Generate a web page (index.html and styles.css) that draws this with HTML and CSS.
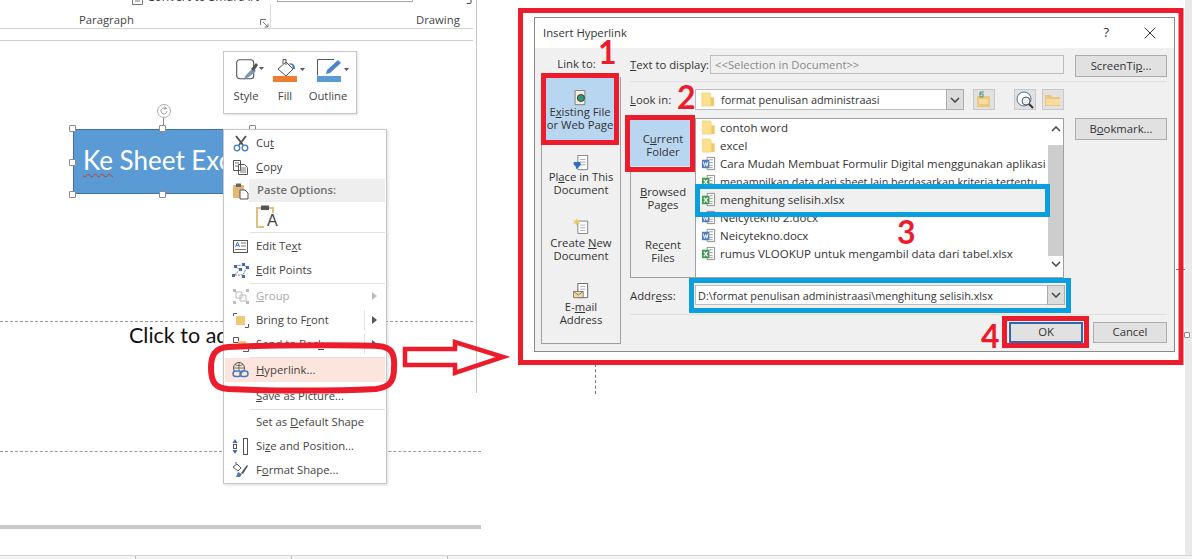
FILE: index.html
```html
<!DOCTYPE html>
<html lang="en">
<head>
<meta charset="utf-8">
<title>Insert Hyperlink</title>
<link rel="stylesheet" href="styles.css">
</head>
<body>
<svg class="defs" width="0" height="0" aria-hidden="true">
  <defs>
    <symbol id="folder" viewBox="0 0 16 17"><path d="M1 1h9l1 1v14H1z" fill="#fbe08e"/><path d="M11 6h4v10h-4z" fill="#f2c767"/><path d="M1 1h9l1 1v14H1z" fill="none" stroke="#efcf7c" stroke-width=".8"/></symbol>
    <symbol id="xls" viewBox="0 0 16 16"><path d="M6.500 1.500h8v13h-8z" fill="#fff" stroke="#8b8b8b"/><path d="M9 4h3.500M9 7h3.500M9 10h3.500M9 12.500h3.500" stroke="#9a9a9a"/><path d="M1 4h8v9H1z" fill="#3f9a4d"/><path d="M3 6l4 5M7 6l-4 5" stroke="#fff" stroke-width="1.300"/></symbol>
    <symbol id="doc" viewBox="0 0 16 16"><path d="M6.500 1.500h8v13h-8z" fill="#fff" stroke="#8b8b8b"/><path d="M9 4h3.500M9 7h3.500M9 10h3.500M9 12.500h3.500" stroke="#9a9a9a"/><path d="M1 4h8v9H1z" fill="#4f78c0"/><path d="M2.500 6l1.200 5 1.300-4 1.300 4 1.200-5" stroke="#fff" fill="none"/></symbol>
    <symbol id="chev" viewBox="0 0 10 6"><path d="M1 1l4 4 4-4" fill="none" stroke="#444" stroke-width="1.500"/></symbol>
    <symbol id="caret" viewBox="0 0 5 8"><path d="M0 0l5 4-5 4z"/></symbol>
  </defs>
</svg>

<div class="workspace">
  <div class="ribbon">
    <div class="ribbon-clip">
      <svg class="convert-ic" width="11" height="5" viewBox="0 0 11 5"><path d="M.5 0v4.500h10V0M3 1h5" fill="none" stroke="#777"/></svg>
      <span class="convert">Convert to SmartArt</span>
      <span class="fontbox"></span>
      <span class="three">3</span>
    </div>
    <div class="ribbon-groups">
      <div class="group group-para">
        <span>Paragraph</span>
        <svg class="launcher" width="9" height="9" viewBox="0 0 9 9"><path d="M.5 6V.5H6M3 3l5 5M8 4.500V8H4.500" fill="none" stroke="#777"/></svg>
      </div>
      <div class="group group-draw"><span>Drawing</span></div>
    </div>
  </div>
  <div class="ruler"></div>
  <div class="canvas">
    <div class="dash dash-a"></div>
    <div class="dash dash-b"></div>
    <div class="placeholder">Click to add</div>
    <div class="shape">
      <span class="shape-text"><span class="squiggle">Ke</span> Sheet Excel</span>
      <i class="handle h-tl"></i><i class="handle h-tc"></i><i class="handle h-tr"></i>
      <i class="handle h-ml"></i><i class="handle h-bl"></i><i class="handle h-bc"></i>
      <i class="stem"></i>
      <svg class="rotate" width="16" height="16" viewBox="0 0 16 16"><circle cx="8" cy="8" r="6.500" fill="#fff" stroke="#aaa"/><path d="M11 8a3 3 0 1 1-1-2.300M8.500 3.500l2 2-2.500.8" fill="none" stroke="#999"/></svg>
    </div>
  </div>
</div>
<div class="hscroll"></div>
<div class="statusbar"><i></i><i></i><i></i></div>
<div class="rightstrip"></div>
<i class="vdash"></i>
<i class="hdash-right"></i>
<i class="handle far-handle"></i>

<div class="minibar">
  <div class="mini mini-style">
    <svg width="30" height="25" viewBox="0 0 30 25"><rect x=".7" y=".7" width="17" height="19" rx="3" fill="#fff" stroke="#555" stroke-width="1.100"/><path d="M7 21l3-5 7-7 3 3-7 6z" fill="#7b97b8"/><path d="M15 10l5-6 2 2-4 6z" fill="#555"/><path d="M23 8h5l-2.500 3z" fill="#555"/></svg>
    <span>Style</span>
  </div>
  <div class="mini mini-fill">
    <svg width="32" height="25" viewBox="0 0 32 25"><path d="M5 10l8-7 7 7-7 7z" fill="#fff" stroke="#555"/><path d="M10 5V.5h3V6" fill="none" stroke="#555"/><path d="M15 5c4-2 7 0 7 5h-2l-1-4z" fill="#3f7cc0"/><path d="M0 17h24v6H0z" fill="#ed7d31"/><path d="M27 9h5l-2.500 3z" fill="#555"/></svg>
    <span>Fill</span>
  </div>
  <div class="mini mini-outline">
    <svg width="32" height="25" viewBox="0 0 32 25"><path d="M17 .5H.5v16" fill="none" stroke="#555"/><path d="M9 15l1-4L21 1l3 3-11 10z" fill="#4a86c8"/><path d="M0 17h24v6H0z" fill="#5b9bd5"/><path d="M27 9h5l-2.500 3z" fill="#555"/></svg>
    <span>Outline</span>
  </div>
</div>

<div class="menu">
  <div class="item"><span class="ic"><svg width="16" height="17" viewBox="0 0 16 17"><path d="M3 1l7 9M13 1L6 10" stroke="#555" stroke-width="2"/><circle cx="4" cy="13" r="2.800" fill="none" stroke="#3f7cc0" stroke-width="1.300"/><circle cx="12" cy="13" r="2.800" fill="none" stroke="#3f7cc0" stroke-width="1.300"/></svg></span><span>Cu<u>t</u></span></div>
  <div class="item"><span class="ic"><svg width="16" height="15" viewBox="0 0 16 15"><path d="M.5.500h7v10h-7zM5.500 4.500h6l3 3v7h-9z" fill="#fff" stroke="#555"/><path d="M2 3h4M2 6h3M7 8h6M7 10h6M7 12h6" stroke="#777"/></svg></span><span><u>C</u>opy</span></div>
  <div class="item item-head"><span class="ic"><svg width="17" height="18" viewBox="0 0 17 18"><path d="M1 3h11v13H1z" fill="#e4b874"/><path d="M4 1.500h5V5H4z" fill="#666"/><path d="M8 8h5l3 3v6H8z" fill="#fff" stroke="#555"/></svg></span><span class="head-label">Paste Options:</span></div>
  <div class="paste-row"><svg width="22" height="25" viewBox="0 0 22 25"><path d="M1 4h16v19H1z" fill="#fff" stroke="#e4bd80" stroke-width="2"/><path d="M5 1.500h8V6H5z" fill="#555"/><rect x="8" y="9" width="14" height="16" fill="#fff"/></svg><b>A</b></div>
  <div class="sep"></div>
  <div class="item"><span class="ic"><svg width="15" height="13" viewBox="0 0 15 13"><rect x=".5" y=".5" width="14" height="12" fill="#fff" stroke="#555"/><path d="M2.500 7l2-5 2 5M3.300 5.500h2.500" fill="none" stroke="#3f7cc0"/><path d="M8 3h5M8 6h5M2 9.500h11" stroke="#777"/></svg></span><span>Edit Te<u>x</u>t</span></div>
  <div class="item"><span class="ic"><svg width="17" height="15" viewBox="0 0 17 15"><path d="M3 3l5 4-6 5h9l4-8-4-2z" fill="none" stroke="#777" stroke-dasharray="2 1"/><path d="M0 11h3v3H0zM10 0h3v3h-3zM7 5h3v3H7zM14 3h3v3h-3zM10 12h3v3h-3zM2 2h3v3H2z" fill="#3f6fa8"/></svg></span><span><u>E</u>dit Points</span></div>
  <div class="sep sep-top"></div>
  <div class="item item-off"><span class="ic"><svg width="16" height="15" viewBox="0 0 16 15"><path d="M3 3h6v6H3zM7 6h6v6H7z" fill="none" stroke="#bbb"/><path d="M0 0h3v3H0zM13 0h3v3h-3zM0 12h3v3H0zM13 12h3v3h-3z" fill="#bbb"/></svg></span><span><u>G</u>roup</span><svg class="caret" width="5" height="8"><use href="#caret"/></svg></div>
  <div class="item"><span class="ic"><svg width="16" height="15" viewBox="0 0 16 15"><path d="M.5 3V.5H4M15.500 11v3.500H12" fill="none" stroke="#555"/><rect x="3" y="3" width="9" height="9" fill="#f0c878"/></svg></span><span>Bring to F<u>r</u>ont</span><i class="vbar"></i><svg class="caret" width="5" height="8"><use href="#caret"/></svg></div>
  <div class="item"><span class="ic"><svg width="16" height="15" viewBox="0 0 16 15"><path d="M.5.500h5v5h-5zM10 14.500h5.500v-5" fill="none" stroke="#555"/><rect x="5" y="4" width="8" height="8" fill="#f0c878"/></svg></span><span>Send to Bac<u>k</u></span><i class="vbar"></i><svg class="caret" width="5" height="8"><use href="#caret"/></svg></div>
  <div class="sep sep-top"></div>
  <div class="item item-hot"><span class="ic"><svg width="17" height="16" viewBox="0 0 17 16"><circle cx="7" cy="6" r="5.500" fill="none" stroke="#555"/><path d="M1.500 6h11M7 .5v11M3 2.500c2 1.500 6 1.500 8 0" fill="none" stroke="#555" stroke-width=".8"/><rect x="1" y="9" width="8" height="5.500" rx="2.700" fill="#fde4dc" stroke="#3f7cc0" stroke-width="1.500"/><rect x="8" y="9" width="8" height="5.500" rx="2.700" fill="none" stroke="#3f7cc0" stroke-width="1.500"/></svg></span><span><u>H</u>yperlink...</span></div>
  <div class="item item-gap"><span class="ic"></span><span><u>S</u>ave as Picture...</span></div>
  <div class="sep sep-top"></div>
  <div class="item"><span class="ic"></span><span>Set as <u>D</u>efault Shape</span></div>
  <div class="item"><span class="ic"><svg width="17" height="17" viewBox="0 0 17 17"><path d="M.5 5h5l-2.500-4zM.5 12h5l-2.500 4z" fill="#3f6fa8"/><rect x="1.500" y="6.500" width="3" height="4" fill="none" stroke="#555"/><rect x="11.500" y=".5" width="4" height="16" fill="none" stroke="#555"/></svg></span><span>Si<u>z</u>e and Position...</span></div>
  <div class="item"><span class="ic"><svg width="17" height="16" viewBox="0 0 17 16"><path d="M1 5l4-3 4 4-3 3z" fill="#fff" stroke="#555"/><path d="M4 2V0" stroke="#555"/><path d="M4 15l2-5 4 2-2 3z" fill="#4f7ca8"/><path d="M9 11l6-8 1 1-5 8z" fill="#555"/></svg></span><span>F<u>o</u>rmat Shape...</span></div>
</div>

<section class="dialog">
  <header class="titlebar">
    <span class="title">Insert Hyperlink</span>
    <span class="help">?</span>
    <svg class="close" width="12" height="12" viewBox="0 0 12 12"><path d="M.7.700l10.600 10.600M11.300.700L.7 11.300" stroke="#333" stroke-width="1"/></svg>
  </header>
  <div class="dialog-body">
    <aside class="linkto">
      <div class="linkto-label">Link to:</div>
      <nav class="linkpanel">
        <div class="linktab linktab-on">
          <svg viewBox="0 0 18 18"><path d="M3.500.5h11v16h-11z" fill="#f6efd8" stroke="#777"/><circle cx="10" cy="9" r="4" fill="#2f9a78" stroke="#333"/></svg>
          <span>E<u>x</u>isting File<br>or Web Page</span>
        </div>
        <div class="linktab linktab-place">
          <svg viewBox="0 0 18 18"><path d="M5.500.5h11v16h-11z" fill="#fff" stroke="#777"/><path d="M8 5h6M8 8h6M8 11h6" stroke="#8aa"/><path d="M8 8L1 8c-1 2 0 4 2 5l1 3 5-5z" fill="#2f6fc0"/></svg>
          <span>Pl<u>a</u>ce in This<br>Document</span>
        </div>
        <div class="linktab linktab-new">
          <svg viewBox="0 0 18 18"><path d="M5.500 3.500h11v14h-11z" fill="#fff" stroke="#777"/><path d="M8 8h6M8 11h6M8 14h6" stroke="#aaa"/><path d="M4 0l1 3 3-1-2 3 3 2-4-1-1 3-1-3-3 1 2-3-2-2 3 1z" fill="#e8c860"/></svg>
          <span>Create <u>N</u>ew<br>Document</span>
        </div>
        <div class="linktab linktab-mail">
          <svg viewBox="0 0 18 18"><path d="M5.500.5h11v16h-11z" fill="#fff" stroke="#555"/><path d="M8 4h6M8 7h6" stroke="#aaa"/><path d="M.5 9.500h11v7H.5z" fill="#f2d9a0" stroke="#777"/><path d="M.5 9.500l5.500 4 5.500-4" fill="none" stroke="#777"/></svg>
          <span>E-<u>m</u>ail<br>Address</span>
        </div>
      </nav>
    </aside>
    <div class="main">
      <div class="row row-display">
        <label class="label-display"><u>T</u>ext to display:</label>
        <div class="field field-display">&lt;&lt;Selection in Document&gt;&gt;</div>
        <button class="btn btn-side">ScreenTi<u>p</u>...</button>
      </div>
      <div class="hr"></div>
      <div class="row row-look">
        <label class="label-look"><u>L</u>ook in:</label>
        <div class="combo">
          <svg class="combo-folder" width="14" height="15"><use href="#folder"/></svg>
          <span class="combo-text">format penulisan administraasi</span>
          <span class="combo-btn"><svg width="10" height="6"><use href="#chev"/></svg></span>
        </div>
        <span class="tool tool-a"><svg width="18" height="17" viewBox="0 0 18 17"><path d="M2 5h13v11H2z" fill="#eec77e"/><path d="M4 8h9v5H4z" fill="#f7dca0"/><path d="M5 6V1h4M5 3h3v3H5" fill="none" stroke="#3f9a78"/></svg></span>
        <span class="tool tool-b"><svg width="18" height="18" viewBox="0 0 18 18"><circle cx="8" cy="8" r="7" fill="#fff" stroke="#4a6f98"/><circle cx="10" cy="10" r="4" fill="#e8f0f6" stroke="#555"/><path d="M13 13l4 4" stroke="#333" stroke-width="2"/></svg></span>
        <span class="tool tool-c"><svg width="18" height="14" viewBox="0 0 18 14"><path d="M1 2h6l1 2h8v9H1z" fill="#eec77e"/><path d="M2 6h14v6H2z" fill="#f7dca0"/></svg></span>
      </div>
      <div class="row row-browse">
        <div class="subtabs">
          <div class="subtab subtab-on">C<u>u</u>rrent<br>Folder</div>
          <div class="subtab subtab-browsed"><u>B</u>rowsed<br>Pages</div>
          <div class="subtab subtab-recent">Re<u>c</u>ent<br>Files</div>
        </div>
        <div class="list">
          <div class="files">
            <div class="file"><svg width="15" height="15"><use href="#folder"/></svg>contoh word</div>
            <div class="file"><svg width="15" height="15"><use href="#folder"/></svg>excel</div>
            <div class="file file-snug"><svg width="15" height="15"><use href="#doc"/></svg>Cara Mudah Membuat Formulir Digital menggunakan aplikasi</div>
            <div class="file file-tight"><svg width="15" height="15"><use href="#xls"/></svg>menampilkan data dari sheet lain berdasarkan kriteria tertentu</div>
            <div class="file file-on"><svg width="15" height="15"><use href="#xls"/></svg>menghitung selisih.xlsx</div>
            <div class="file"><svg width="15" height="15"><use href="#doc"/></svg>Neicytekno 2.docx</div>
            <div class="file"><svg width="15" height="15"><use href="#doc"/></svg>Neicytekno.docx</div>
            <div class="file"><svg width="15" height="15"><use href="#xls"/></svg>rumus VLOOKUP untuk mengambil data dari tabel.xlsx</div>
          </div>
          <div class="scrollbar">
            <svg width="10" height="6" class="flip"><use href="#chev"/></svg>
            <div class="thumb"></div>
            <svg width="10" height="6"><use href="#chev"/></svg>
          </div>
        </div>
        <button class="btn btn-side">B<u>o</u>okmark...</button>
      </div>
      <div class="row row-address">
        <label class="label-look">Addr<u>e</u>ss:</label>
        <div class="combo combo-address">
          <span class="combo-text">D:\format penulisan administraasi\menghitung selisih.xlsx</span>
          <span class="combo-btn"><svg width="10" height="6"><use href="#chev"/></svg></span>
        </div>
      </div>
      <div class="hr hr-foot"></div>
      <div class="row row-foot">
        <button class="btn btn-foot btn-ok">OK</button>
        <button class="btn btn-foot">Cancel</button>
      </div>
    </div>
  </div>
</section>

<svg class="marks" width="1192" height="559" viewBox="0 0 1192 559" aria-hidden="true">
  <g fill="none" stroke="#ec1c2c" stroke-width="5">
    <rect x="520.500" y="10.500" width="660.500" height="352"/>
    <rect x="543.500" y="75.500" width="73" height="67"/>
    <rect x="627.500" y="117.500" width="65" height="52"/>
    <rect x="1004.500" y="318.500" width="82" height="27"/>
    <path d="M228 347c40-2 130-2 150-1 14 1 17 8 16 22 0 12-3 19-18 21-40 2-110 2-148 0-13-1-17-7-17-21 0-13 4-20 17-21z" stroke-width="6"/>
    <path d="M405 349h50v-7l48 15-48 16v-8h-50z" stroke-width="4.500"/>
  </g>
  <g fill="none" stroke="#0c9fe0" stroke-width="5">
    <rect x="697.500" y="186.500" width="350" height="28"/>
    <rect x="691.500" y="280.500" width="377" height="30"/>
  </g>
</svg>
<span class="num num-1">1</span>
<span class="num num-2">2</span>
<span class="num num-3">3</span>
<span class="num num-4">4</span>
</body>
</html>
```
FILE: styles.css
```css
* { box-sizing: border-box; }
html, body { margin: 0; padding: 0; }
body {
  position: relative;
  width: 1192px;
  height: 559px;
  overflow: hidden;
  background: #fff;
  font-family: "Open Sans", "Noto Sans", sans-serif;
  font-size: 11.3px;
  color: #444;
}
.defs { position: absolute; }
u { text-underline-offset: 1px; }
svg { display: block; flex: none; }

.workspace { position: relative; width: 481px; height: 525px; }
.workspace::after { content: ""; position: absolute; left: 476px; top: 0; width: 1px; height: 393px; background: #c6c6c6; }
.ribbon { position: relative; width: 473px; height: 29px; border-bottom: 1px solid #d4d4d4; }
.ribbon-clip { height: 12px; position: relative; overflow: hidden; }
.convert-ic { position: absolute; left: 132px; top: 0; }
.convert { position: absolute; left: 147px; top: -12px; font-size: 12px; color: #444; }
.fontbox { position: absolute; left: 277px; top: -10px; width: 136px; height: 12px; border: 1px solid #aaa; }
.three { position: absolute; left: 466px; top: -7px; font-size: 11px; line-height: 14px; }
.ribbon-groups { display: flex; height: 16px; align-items: center; }
.group { display: flex; align-items: center; position: relative; }
.group-para { width: 271px; height: 24px; margin-top: -8px; padding: 6px 0 0 79px; border-right: 1px solid #ddd; }
.group-draw { margin-left: 145px; margin-top: -2px; }
.launcher { position: absolute; left: 260px; top: 15px; }
.ruler { width: 473px; height: 12px; border-bottom: 1px solid #ccc; }
.canvas { position: relative; height: 484px; }
.dash { position: absolute; left: 0; border-top: 1px dashed #9a9a9a; }
.dash-a { top: 280px; width: 473px; }
.dash-b { top: 410px; width: 481px; }
.placeholder { position: absolute; left: 129px; top: 281px; font-family: "Lato", sans-serif; font-size: 21.500px; color: #111; white-space: nowrap; }

.shape {
  position: absolute; left: 73px; top: 88px; width: 180px; height: 65px;
  background: #5b9bd5; border: 1px solid #41719c;
}
.shape-text { position: absolute; left: 9px; top: 15px; font-family: "Lato", sans-serif; font-size: 26px; color: #fff; white-space: nowrap; line-height: 30px; }
.squiggle { text-decoration: underline wavy #c0392b 1px; text-underline-offset: 3px; }
.handle { position: absolute; width: 7px; height: 7px; background: #fff; border: 1px solid #8a8a8a; border-radius: 1px; }
.h-tl { left: -5px; top: -5px; } .h-tc { left: 85px; top: -5px; } .h-tr { left: 175px; top: -5px; }
.h-ml { left: -5px; top: 29px; } .h-bl { left: -5px; top: 61px; } .h-bc { left: 85px; top: 61px; }
.stem { position: absolute; left: 89px; top: -12px; width: 1px; height: 8px; background: #8a8a8a; }
.rotate { position: absolute; left: 82px; top: -27px; }

.hscroll { position: absolute; left: 0; top: 525px; width: 481px; height: 4px; background: #c8c8c8; }
.statusbar { position: absolute; left: 0; top: 555px; width: 1192px; height: 4px; border-top: 1px solid #d6d6d6; background: #f4f4f4; display: flex; padding-left: 135px; gap: 155px; }
.statusbar i { width: 1px; height: 3px; background: #bbb; }
.rightstrip { position: absolute; right: 0; top: 0; width: 7px; height: 555px; background: #e9e9e9; }
.vdash { position: absolute; left: 595px; top: 364px; height: 30px; border-left: 1px dashed #777; }
.hdash-right { position: absolute; left: 1176px; top: 269px; width: 9px; border-top: 1px dashed #777; }
.far-handle { left: 1184px; top: 332px; width: 6px; height: 6px; }

.minibar {
  position: absolute; left: 223px; top: 51px; width: 134px; height: 63px;
  background: #fff; border: 1px solid #c6c6c6; box-shadow: 1px 1px 2px rgba(0,0,0,.12);
  display: flex; padding: 7px 0 0 7px;
}
.mini { display: flex; flex-direction: column; align-items: center; gap: 4px; width: 30px; }
.mini svg { align-self: flex-start; }
.mini span { line-height: 16px; }
.mini-style svg { margin-left: 5px; }
.mini-fill { margin-left: 9px; }
.mini-fill svg { margin-left: 3px; }
.mini-outline { margin-left: 13px; }
.mini-outline svg { margin-left: 4px; }

.menu {
  position: absolute; left: 223px; top: 129px; width: 164px; height: 355px;
  background: #fff; border: 1px solid #c6c6c6; box-shadow: 1px 1px 3px rgba(0,0,0,.15);
  padding: 1px;
}
.item { display: flex; align-items: center; height: 24px; position: relative; white-space: nowrap; }
.item > span:not(.ic):not(.head-label) { margin-top: -2px; }
.ic { width: 31px; display: flex; justify-content: center; align-items: center; flex: none; }
.item-head { height: 23px; }
.head-label { flex: 1; align-self: stretch; background: #eee; margin-left: -7px; padding-left: 8px; line-height: 22px; font-weight: 600; color: #707070; }
.paste-row { position: relative; height: 30px; padding: 2px 0 0 31px; }
.paste-row b { position: absolute; left: 42px; top: 10px; font-size: 16px; line-height: 18px; color: #444; font-family: "Liberation Sans", sans-serif; font-weight: 400; }
.sep { height: 1px; background: #e2e2e2; margin: 0 0 1px 25px; }
.sep-top { margin-top: 1px; margin-bottom: 0; }
.item-off { color: #aaa; }
.item-hot { background: #fde4dc; }
.item-gap { margin-top: 2px; }
.caret { position: absolute; left: 147px; top: 8px; fill: #555; }
.item-off .caret { fill: #bbb; }
.vbar { position: absolute; left: 139px; top: 2px; width: 1px; height: 20px; background: #e2e2e2; }

.dialog {
  position: absolute; left: 534px; top: 17px; width: 641px; height: 335px;
  background: #f0f0f0; border: 1px solid #8a8a8a; color: #333;
  display: flex; flex-direction: column;
}
.titlebar { height: 30px; background: #fff; display: flex; align-items: center; padding: 0 18px 2px 8px; flex: none; }
.title { flex: 1; }
.help { font-size: 13px; margin-right: 35px; color: #333; }
.close { margin-top: 2px; }
.dialog-body { flex: 1; display: flex; padding: 0 7px 0 6px; }
.linkto { width: 89px; flex: none; }
.linkto-label { height: 29px; padding-top: 8px; line-height: 16px; text-align: center; width: 71px; }
.linkpanel { width: 80px; height: 267px; border: solid #a0a0a0; border-width: 0 1px 1px; }
.linktab { display: flex; flex-direction: column; align-items: center; text-align: center; line-height: 13px; }
.linktab svg { width: 16px; height: 16px; }
.linktab span { display: block; }
.linktab-on { height: 64px; background: #b9d6f0; margin: 0 5px 0 3px; padding-top: 13px; }
.linktab-on span { margin-top: -1px; }
.linktab-place { margin-top: 14px; }
.linktab-place span { margin-top: -1px; }
.linktab-new { margin-top: 22px; }
.linktab-new span { margin-top: 2px; }
.linktab-mail { margin-top: 21px; }
.linktab-mail span { margin-top: 1px; }
.main { width: 537px; flex: none; padding-top: 7px; }
.row { display: flex; }
.row-display { height: 22px; align-items: flex-start; }
.label-display { width: 80px; line-height: 19px; white-space: nowrap; }
.field-display { width: 354px; height: 19px; border: 1px solid #bdbdbd; background: #f0f0f0; color: #8a8a8a; padding-left: 4px; line-height: 17px; margin-right: 11px; }
.btn { font: inherit; color: #333; background: #e1e1e1; border: 1px solid #adadad; padding: 0 0 2px; margin: 0; border-radius: 0; }
.btn-side { width: 92px; height: 22px; flex: none; }
.hr { height: 1px; background: #e0e0e0; margin-top: 4px; }
.row-look { margin-top: 7px; height: 21px; align-items: center; }
.label-look { width: 65px; flex: none; white-space: nowrap; line-height: 21px; }
.combo { width: 269px; height: 21px; background: #fff; border: 1px solid #bdbdbd; display: flex; align-items: center; padding-left: 5px; position: relative; }
.combo-folder { margin-right: 6px; }
.combo-text { flex: 1; white-space: nowrap; color: #333; font-size: 10.900px; }
.combo-btn { width: 18px; align-self: stretch; background: #dcdcdc; border: 1px solid #adadad; display: flex; align-items: center; justify-content: center; margin: -1px -1px -1px 0; }
.tool { height: 21px; width: 22px; background: #e1e1e1; border: 1px solid #c8c8c8; display: flex; align-items: center; justify-content: center; }
.tool-a { margin-left: 9px; }
.tool-b { margin-left: 19px; }
.tool-c { margin-left: 6px; }
.row-browse { margin-top: 8px; height: 160px; align-items: flex-start; }
.subtabs { width: 65px; height: 160px; flex: none; border: solid #a0a0a0; border-width: 0 0 1px 1px; text-align: center; line-height: 13px; }
.subtab-on { height: 48px; background: #b9d6f0; padding-top: 14px; margin: 0 -1px; }
.subtab-browsed { margin-top: 19px; }
.subtab-recent { margin-top: 27px; }
.list { width: 369px; height: 160px; background: #fff; border: 1px solid #a0a0a0; display: flex; margin-right: 11px; flex: none; overflow: hidden; }
.files { width: 352px; flex: none; margin-top: -1px; overflow: hidden; }
.file { height: 18px; display: flex; align-items: center; gap: 4px; padding-left: 5px; white-space: nowrap; font-size: 11.500px; }
.file-snug { font-size: 11.400px; }
.file-tight { font-size: 10.800px; }
.file-on { background: #f0f0f0; box-shadow: 0 0 0 4px #f0f0f0; }
.scrollbar { flex: 1; display: flex; flex-direction: column; align-items: center; padding-top: 7px; }
.flip { transform: rotate(180deg); }
.thumb { width: 100%; height: 111px; background: #cdcdcd; margin: 13px 0 5px; }
.row-address { margin-top: 7px; height: 20px; align-items: center; }
.combo-address { width: 370px; height: 20px; padding-left: 2px; }
.hr-foot { margin-top: 9px; }
.row-foot { margin-top: 7px; justify-content: flex-end; gap: 10px; }
.btn-foot { width: 74px; height: 21px; }
.btn-ok { border: 2px solid #2a69b0; }

.marks { position: absolute; left: 0; top: 0; pointer-events: none; }
.num { position: absolute; font-family: "Lato", sans-serif; font-weight: 700; font-size: 32px; line-height: 24px; color: #ec1c2c; }
.num-1 { left: 598px; top: 40px; }
.num-2 { left: 677px; top: 85px; }
.num-3 { left: 897px; top: 220px; }
.num-4 { left: 981px; top: 324px; }
```
